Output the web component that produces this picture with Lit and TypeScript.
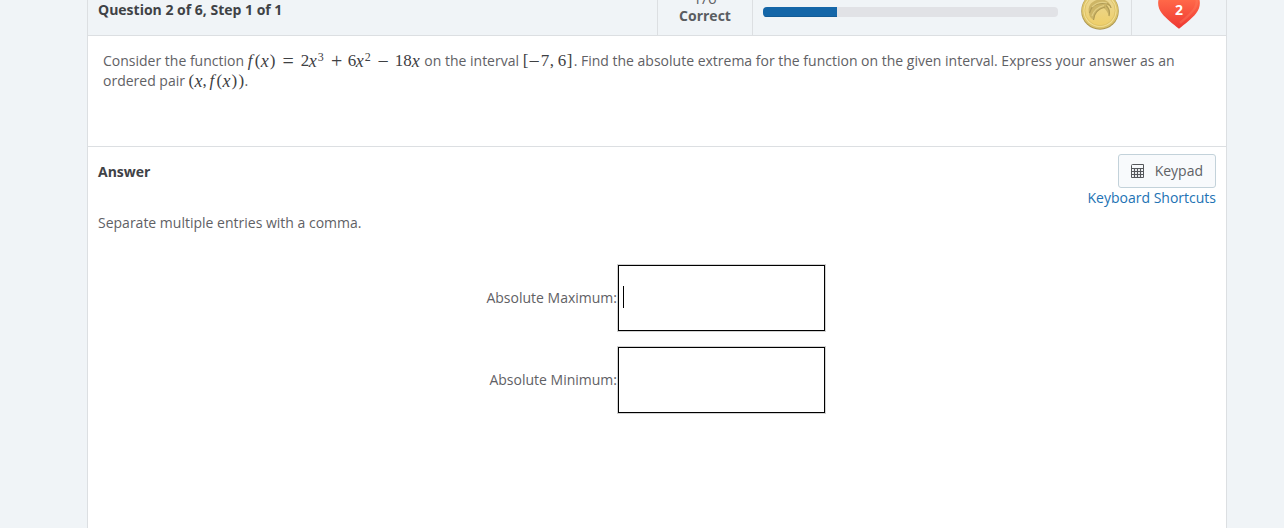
import { LitElement, css, html, svg } from 'lit'
import { customElement, property } from 'lit/decorators.js'

// [text, width, style] for each piece of a formula
type Token = [string, number, string?]

const FUNCTION: Token[] = [
  ['f', 7, 'it f'], ['(', 6], ['x', 9, 'it'], [')', 6], ['=', 25, 'op'],
  ['2', 8], ['x', 9, 'it'], ['3', 8, 'sup'], ['+', 22, 'op'],
  ['6', 8], ['x', 9, 'it'], ['2', 7, 'sup'], ['−', 23, 'op'],
  ['18', 17], ['x', 9, 'it']
]

const INTERVAL: Token[] = [
  ['[', 5], ['−', 13, 'op'], ['7', 9], [',', 8], ['6', 9], [']', 7]
]

const PAIR: Token[] = [
  ['(', 6], ['x', 8, 'it'], [',', 7], ['f', 7, 'it f'], ['(', 6], ['x', 9, 'it'], [')', 7], [')', 6]
]

@customElement('math-formula')
export class MathFormula extends LitElement {
  @property({ attribute: false }) tokens: Token[] = []

  static styles = css`
    :host {
      display: inline-flex;
      height: 20px;
      vertical-align: top;
      color: #3e4043;
      font: 17px/20px 'Liberation Serif', serif;
    }

    .it {
      font-size: 18px;
      font-style: italic;
    }

    .f {
      font-size: 17px;
    }

    .op {
      display: flex;
      justify-content: center;
      font-size: 20px;
    }

    .sup {
      font-size: 12px;
      line-height: 12px;
    }
  `

  render () {
    return this.tokens.map(([text, width, kind]) =>
      html`<span class=${kind ?? ''} style="width: ${width}px">${text}</span>`)
  }
}

@customElement('answer-row')
export class AnswerRow extends LitElement {
  @property() label = ''
  @property({ type: Boolean }) active = false

  static styles = css`
    :host {
      display: flex;
      align-items: center;
      justify-content: flex-end;
    }

    .field {
      display: flex;
      align-items: center;
      box-sizing: border-box;
      width: 207px;
      height: 66px;
      margin-left: 1px;
      padding-left: 4px;
      border: 1px solid #000;
      box-shadow: 0 0 0 1px #d2d2d2;
      background: #fff;
    }

    .caret {
      width: 1px;
      height: 22px;
      margin-bottom: 2px;
      background: #000;
    }
  `

  render () {
    return html`
      <span>${this.label}</span>
      <div class="field">${this.active ? html`<i class="caret"></i>` : ''}</div>
    `
  }
}

const coin = svg`
  <defs>
    <linearGradient id="gold" x1="0" y1="0" x2="0" y2="1">
      <stop offset="0" stop-color="#ead898" />
      <stop offset="1" stop-color="#efcf69" />
    </linearGradient>
  </defs>
  <circle cx="19" cy="19" r="18.8" fill="#ad9852" />
  <circle cx="19" cy="18.5" r="18.2" fill="#dcc268" />
  <circle cx="19" cy="18.5" r="16.6" fill="#f2df93" />
  <circle cx="19" cy="18.5" r="15.2" fill="url(#gold)" stroke="#dabe62" stroke-width=".8" />
  <path d="M8 21C6 13 12 7.500 20 7.500C25 7.500 29 10 30.500 16C29 14 27 13 25 13.500C28 16 29 20 28 24C26.500 20 25 17 22 16C17 18 13 23 12.500 28C9.500 26 8 24 8 21Z" fill="#cdb566" />
  <path d="M8.500 21C10 14 16 10.500 25 11.500C28 12 29.500 13.500 30 16M12.500 28C13 21 18 16.500 24 15M25 13.500C28 16 29 20 28 24" fill="none" stroke="#b09b55" stroke-width="1.200" />
  <path d="M11 15C15 11 20 9.500 26 11M11 24C13 18 17 15 23 13.500" fill="none" stroke="#e2cf86" stroke-width="1.100" />
`

const heart = svg`
  <defs>
    <linearGradient id="red" x1="0" y1="0" x2="0" y2="1">
      <stop offset=".25" stop-color="#ff6748" />
      <stop offset="1" stop-color="#ee3732" />
    </linearGradient>
  </defs>
  <path d="M21 38.800C15 34 8 28.500 4 23.500C0 18.500-1 12 1.500 7C5-.5 16-.5 21 6C26-.5 37-.5 40.500 7C43 12 42 18.500 38 23.500C34 28.500 27 34 21 38.800Z" fill="url(#red)" />
  <path d="M29 4C38 2 41 11 37 18C34 23 28 28 22 33" fill="none" stroke="#ff8065" stroke-width="2.500" opacity=".35" />
`

const keypad = svg`
  <path d="M1.500 .5H12.500V13.500H.5V1.500Q.5 .5 1.500 .5Z" fill="none" stroke="#56585c" />
  <path d="M.5 4.500H12.500M.5 7.500H12.500M.5 10.500H12.500M3.500 4.500V13.500M6.500 4.500V13.500M9.500 4.500V13.500" fill="none" stroke="#56585c" stroke-width="1.200" />
`

@customElement('app-root')
export class AppRoot extends LitElement {
  @property({ type: Number }) progress = 25

  static styles = css`
    :host {
      display: block;
      height: 528px;
      overflow: hidden;
      background: #f0f4f7;
      color: #5f6165;
      font: 14px/20px 'Open Sans', sans-serif;
    }

    .panel {
      box-sizing: border-box;
      width: 1140px;
      height: 528px;
      margin-left: 87px;
      border: solid #dcdfe2;
      border-width: 0 1px;
      background: #fff;
    }

    .header {
      display: flex;
      align-items: flex-end;
      height: 35px;
      overflow: hidden;
      border-bottom: 1px solid #dcdfe2;
      background: #f0f4f7;
    }

    .cell {
      display: flex;
      box-sizing: border-box;
      height: 60px;
      border-right: 1px solid #dcdfe2;
    }

    .cell:last-child {
      border: 0;
    }

    .title {
      width: 570px;
      padding: 25px 10px 0;
      color: #3f4246;
      font-weight: bold;
    }

    .score {
      flex-direction: column;
      align-items: center;
      width: 95px;
      padding-top: 14px;
      line-height: 18px;
    }

    .score span {
      font-size: 15px;
      letter-spacing: 0.5px;
    }

    .score b {
      color: #5a5d61;
    }

    .meter {
      justify-content: space-between;
      width: 379px;
      padding: 17px 12px 0 10px;
    }

    .track {
      width: 295px;
      height: 10px;
      margin-top: 15px;
      border-radius: 4px;
      overflow: hidden;
      background: #e1e2e6;
    }

    .fill {
      height: 100%;
      background: #1466a8;
      box-shadow: inset 0 -1px #125b96;
    }

    .lives {
      flex: 1;
      justify-content: center;
      padding-top: 15px;
    }

    .heart {
      display: grid;
      width: 42px;
      height: 39px;
    }

    .heart > * {
      grid-area: 1 / 1;
    }

    .heart b {
      align-self: center;
      color: #fff;
      text-align: center;
    }

    .question {
      box-sizing: border-box;
      height: 111px;
      padding: 15px;
      border-bottom: 1px solid #dcdfe2;
    }

    .line {
      height: 20px;
      white-space: pre;
    }

    .answer {
      display: flex;
      justify-content: space-between;
      box-sizing: border-box;
      height: 66px;
      padding: 7px 10px 0;
    }

    .answer h2 {
      margin: 8px 0 0;
      color: #3f4246;
      font-size: 14px;
      line-height: 20px;
    }

    .tools {
      display: flex;
      flex-direction: column;
      align-items: flex-end;
    }

    .button {
      display: flex;
      flex-shrink: 0;
      align-items: center;
      gap: 11px;
      box-sizing: border-box;
      width: 98px;
      height: 34px;
      padding: 0 12px;
      border: 1px solid #c3d2da;
      border-radius: 3px;
      background: #f8fafc;
      color: #5f6165;
      font: inherit;
    }

    .link {
      color: #2272b4;
      text-decoration: none;
    }

    .hint {
      padding-left: 10px;
    }

    .rows {
      display: flex;
      flex-direction: column;
      gap: 16px;
      width: 737px;
      padding-top: 32px;
    }
  `

  render () {
    return html`
      <div class="panel">
        <div class="header">
          <div class="cell title">Question 2 of 6, Step 1 of 1</div>
          <div class="cell score"><span>1/6</span><b>Correct</b></div>
          <div class="cell meter">
            <div class="track">
              <div class="fill" style="width: ${this.progress}%"></div>
            </div>
            <svg width="38" height="38">${coin}</svg>
          </div>
          <div class="cell lives">
            <div class="heart">
              <svg width="42" height="39">${heart}</svg>
              <b>2</b>
            </div>
          </div>
        </div>
        <div class="question">
          <div class="line">Consider the function <math-formula .tokens=${FUNCTION}></math-formula> on the interval <math-formula .tokens=${INTERVAL}></math-formula>. Find the absolute extrema for the function on the given interval. Express your answer as an</div>
          <div class="line">ordered pair <math-formula .tokens=${PAIR}></math-formula>.</div>
        </div>
        <div class="answer">
          <h2>Answer</h2>
          <div class="tools">
            <button class="button"><svg width="13" height="14">${keypad}</svg>Keypad</button>
            <a class="link" href="#">Keyboard Shortcuts</a>
          </div>
        </div>
        <div class="hint">Separate multiple entries with a comma.</div>
        <div class="rows">
          <answer-row label="Absolute Maximum:" active></answer-row>
          <answer-row label="Absolute Minimum:"></answer-row>
        </div>
      </div>
    `
  }
}
